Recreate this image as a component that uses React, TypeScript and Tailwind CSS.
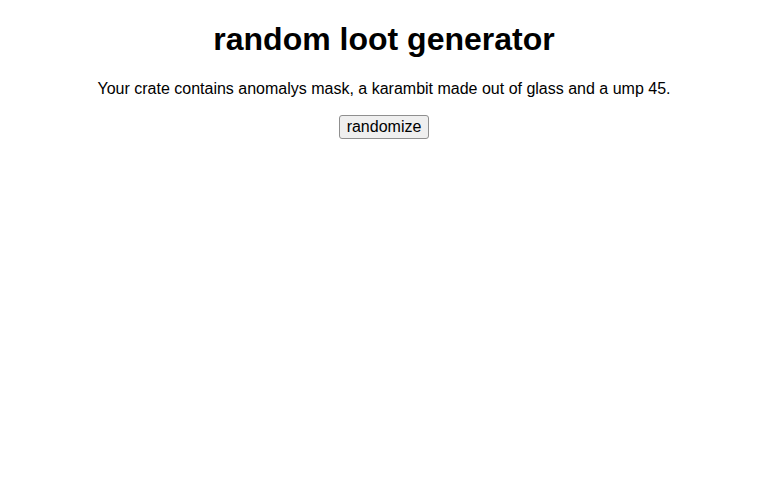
import { useState } from 'react';

const masks = ['anomalys mask', 'a wolf mask', 'a clown mask'];
const knives = ['a karambit made out of glass', 'a butterfly knife made out of gold', 'a bayonet made out of wood'];
const guns = ['a ump 45', 'an ak 47', 'a desert eagle'];

export default function App() {
  const [loot, setLoot] = useState([0, 0, 0]);

  const randomize = () => {
    setLoot([
      Math.floor(Math.random() * masks.length),
      Math.floor(Math.random() * knives.length),
      Math.floor(Math.random() * guns.length),
    ]);
  };

  return (
    <div className="min-h-[480px] bg-white text-black text-center font-['Liberation_Sans',Arial,sans-serif]">
      <h1 className="pt-[21px] text-[32px] font-bold leading-[37px]">random loot generator</h1>
      <p className="mt-[22px] text-base leading-[18px]">
        Your crate contains {masks[loot[0]]}, {knives[loot[1]]} and {guns[loot[2]]}.
      </p>
      <button
        onClick={randomize}
        className="mt-[17px] px-[7px] py-[2px] text-base leading-[18px] bg-[#efefef] border border-[#8f8f8f] rounded-[3px] hover:bg-[#e5e5e5]"
      >
        randomize
      </button>
    </div>
  );
}
